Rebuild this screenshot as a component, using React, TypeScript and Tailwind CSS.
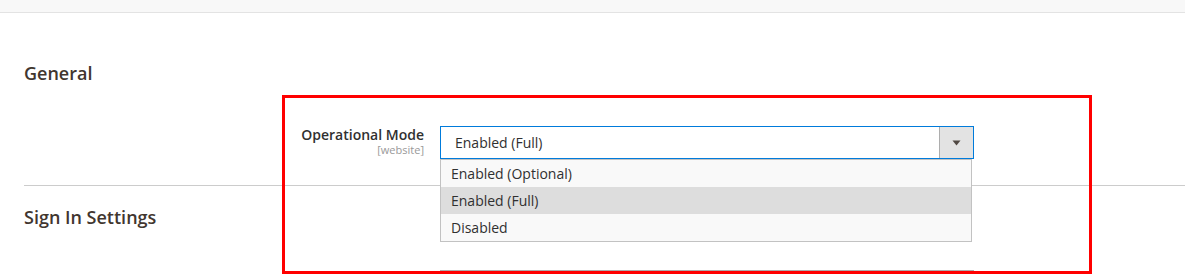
import React from "react";

const options = ["Enabled (Optional)", "Enabled (Full)", "Disabled"];

function ArrowDown() {
  return (
    <svg width="9" height="6" viewBox="0 0 9 6" className="block">
      <path d="M0.5 0.5 H8.5 L4.5 5.5 Z" fill="#514943" />
    </svg>
  );
}

export default function App() {
  return (
    <div
      className="relative h-[274px] w-full overflow-hidden bg-white text-[#303030]"
      style={{ fontFamily: '"Open Sans", "Noto Sans", sans-serif' }}
    >
      <div className="h-[13px] border-b border-[#e3e3e3] bg-[#f8f8f8]" />

      <div className="pl-[24px] pt-[48px]">
        <h3 className="text-[18px] font-semibold leading-[24px] text-[#41362f]">
          General
        </h3>
      </div>

      <div className="mt-[41px] flex pl-[24px]">
        <div className="w-[400px] text-right">
          <div className="text-[14px] font-semibold leading-[18px] text-[#303030]">
            Operational Mode
          </div>
          <div className="text-[11px] leading-[12px] text-[#999999]">[website]</div>
        </div>

        <div className="relative ml-[16px] w-[534px]">
          <div className="flex h-[33px] border border-[#007bdb] bg-white">
            <div className="flex flex-1 items-center pl-[14px] text-[14px]">
              Enabled (Full)
            </div>
            <div className="flex w-[34px] items-center justify-center border-l border-[#adadad] bg-[#e3e3e3]">
              <ArrowDown />
            </div>
          </div>

          <ul className="absolute left-0 top-full z-10 w-[532px] border border-[#c2c2c2] bg-[#f9f9f9]">
            {options.map((o) => (
              <li
                key={o}
                className={`flex h-[27px] items-center pl-[10px] text-[14px] ${
                  o === "Enabled (Full)" ? "bg-[#dddddd]" : ""
                }`}
              >
                {o}
              </li>
            ))}
          </ul>
        </div>
      </div>

      <div className="ml-[24px] mt-[26px] border-t border-[#cccccc]" />

      <div className="pl-[24px] pt-[19px]">
        <h3 className="text-[18px] font-semibold leading-[24px] text-[#41362f]">
          Sign In Settings
        </h3>
      </div>

      <div className="ml-[440px] mt-[41px] h-[33px] w-[534px] border border-[#adadad]" />

      <div className="pointer-events-none absolute left-[282px] top-[95px] h-[179px] w-[810px] border-[3px] border-[#ff0000]" />
    </div>
  );
}
